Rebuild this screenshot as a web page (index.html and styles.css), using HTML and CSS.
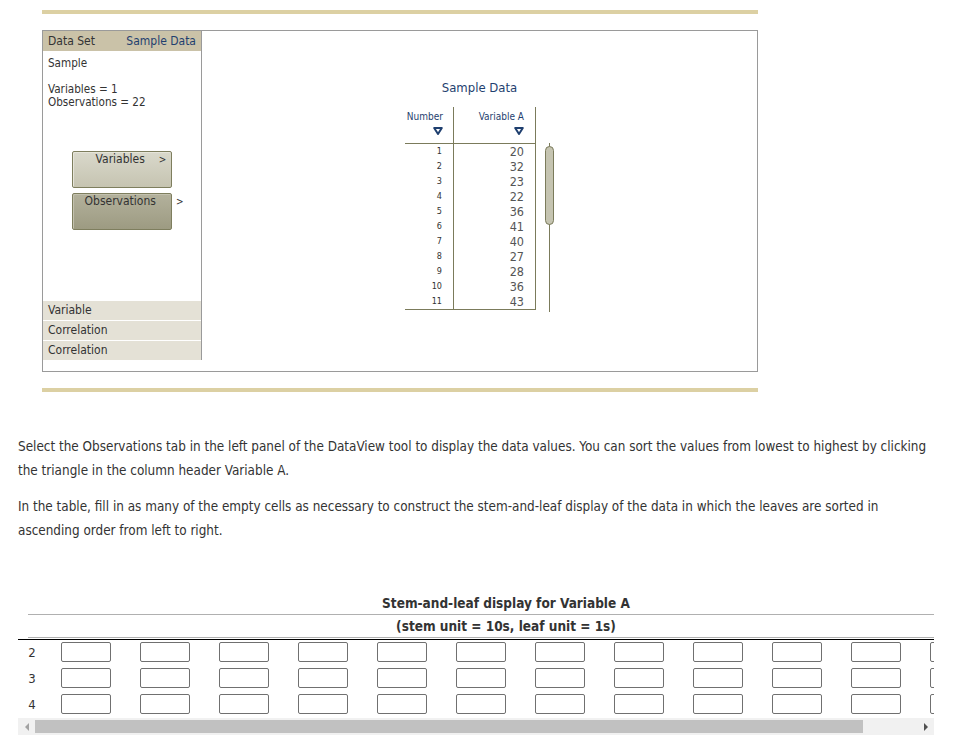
FILE: index.html
```html
<!DOCTYPE html>
<html>
<head>
<meta charset="utf-8">
<title>DataView</title>
<link rel="stylesheet" href="styles.css">
</head>
<body>
<div class="dv-wrap">
  <div class="rule"></div>
  <div class="dv">
    <div class="side">
      <div class="side-head"><span>Data Set</span><span class="blue">Sample Data</span></div>
      <div class="side-info">
        <div>Sample</div>
        <div class="counts">Variables = 1<br>Observations = 22</div>
      </div>
      <div class="tabs">
        <button class="tab tab-var"><span class="lbl">Variables<span class="arr">&gt;</span></span></button>
        <button class="tab tab-obs"><span class="lbl">Observations<span class="arr">&gt;</span></span></button>
      </div>
      <div class="spacer"></div>
      <ul class="menu">
        <li>Variable</li>
        <li>Correlation</li>
        <li>Correlation</li>
      </ul>
    </div>
    <div class="main">
      <div class="title">Sample Data</div>
      <div class="grid">
        <table class="obs">
          <thead>
            <tr>
              <th class="c1">Number<svg class="tri" width="10" height="8" viewBox="0 0 10 8"><polygon points="1.2,1 8.8,1 5,7" fill="none" stroke="#1f3f6f" stroke-width="2" stroke-linejoin="round"/></svg></th>
              <th class="c2">Variable A<svg class="tri" width="10" height="8" viewBox="0 0 10 8"><polygon points="1.2,1 8.8,1 5,7" fill="none" stroke="#1f3f6f" stroke-width="2" stroke-linejoin="round"/></svg></th>
            </tr>
          </thead>
          <tbody>
            <tr><td class="c1">1</td><td class="c2">20</td></tr>
            <tr><td class="c1">2</td><td class="c2">32</td></tr>
            <tr><td class="c1">3</td><td class="c2">23</td></tr>
            <tr><td class="c1">4</td><td class="c2">22</td></tr>
            <tr><td class="c1">5</td><td class="c2">36</td></tr>
            <tr><td class="c1">6</td><td class="c2">41</td></tr>
            <tr><td class="c1">7</td><td class="c2">40</td></tr>
            <tr><td class="c1">8</td><td class="c2">27</td></tr>
            <tr><td class="c1">9</td><td class="c2">28</td></tr>
            <tr><td class="c1">10</td><td class="c2">36</td></tr>
            <tr><td class="c1">11</td><td class="c2">43</td></tr>
          </tbody>
        </table>
        <div class="vscroll"><div class="vthumb"></div></div>
      </div>
    </div>
  </div>
  <div class="rule rule-bottom"></div>
</div>

<div class="q">
  <p>Select the Observations tab in the left panel of the DataView tool to display the data values. You can sort the values from lowest to highest by clicking the triangle in the column header Variable A.</p>
  <p>In the table, fill in as many of the empty cells as necessary to construct the stem-and-leaf display of the data in which the leaves are sorted in ascending order from left to right.</p>
</div>

<div class="sl-wrap">
  <div class="sl-clip">
    <div class="sl">
      <div class="sl-head">
        <div class="sl-row">Stem-and-leaf display for Variable A</div>
        <div class="sl-row">(stem unit = 10s, leaf unit = 1s)</div>
      </div>
      <table class="stem">
        <tbody>
          <tr>
            <td class="stem-n">2</td>
            <td class="cell"><input type="text"></td><td class="cell"><input type="text"></td><td class="cell"><input type="text"></td><td class="cell"><input type="text"></td><td class="cell"><input type="text"></td><td class="cell"><input type="text"></td><td class="cell"><input type="text"></td><td class="cell"><input type="text"></td><td class="cell"><input type="text"></td><td class="cell"><input type="text"></td><td class="cell"><input type="text"></td><td class="cell"><input type="text"></td>
          </tr>
          <tr>
            <td class="stem-n">3</td>
            <td class="cell"><input type="text"></td><td class="cell"><input type="text"></td><td class="cell"><input type="text"></td><td class="cell"><input type="text"></td><td class="cell"><input type="text"></td><td class="cell"><input type="text"></td><td class="cell"><input type="text"></td><td class="cell"><input type="text"></td><td class="cell"><input type="text"></td><td class="cell"><input type="text"></td><td class="cell"><input type="text"></td><td class="cell"><input type="text"></td>
          </tr>
          <tr>
            <td class="stem-n">4</td>
            <td class="cell"><input type="text"></td><td class="cell"><input type="text"></td><td class="cell"><input type="text"></td><td class="cell"><input type="text"></td><td class="cell"><input type="text"></td><td class="cell"><input type="text"></td><td class="cell"><input type="text"></td><td class="cell"><input type="text"></td><td class="cell"><input type="text"></td><td class="cell"><input type="text"></td><td class="cell"><input type="text"></td><td class="cell"><input type="text"></td>
          </tr>
        </tbody>
      </table>
    </div>
  </div>
  <div class="hbar">
    <span class="hbtn"><span class="arrow-l"></span></span>
    <span class="hthumb"></span>
    <span class="hbtn hbtn-r"><span class="arrow-r"></span></span>
  </div>
</div>
</body>
</html>
```

FILE: styles.css
```css
body {
  margin: 0;
  font-family: "DejaVu Sans Condensed", "DejaVu Sans", sans-serif;
  color: #333;
  background: #fff;
}

/* ---------- DataView widget ---------- */
.dv-wrap {
  margin-left: 42px;
  width: 716px;
  padding-top: 10px;
}
.rule {
  height: 4px;
  background: #dcd0a3;
}
.rule-bottom {
  margin-top: 16px;
}
.dv {
  margin-top: 16px;
  height: 340px;
  border: 1px solid #9a9a9a;
  display: flex;
}

.side {
  width: 158px;
  height: 329px;
  border-right: 1px solid #9a9a9a;
  display: flex;
  flex-direction: column;
  font-size: 12px;
}
.side-head {
  height: 20px;
  background: #cac2a8;
  display: flex;
  justify-content: space-between;
  align-items: center;
  padding: 0 5px;
}
.blue {
  color: #1f3f6f;
}
.side-info {
  padding: 5px 5px 0;
  line-height: 14px;
  font-size: 11.6px;
}
.counts {
  margin-top: 13px;
  line-height: 13px;
}
.tabs {
  margin-top: 42px;
  padding-left: 29px;
  display: flex;
  flex-direction: column;
  gap: 5px;
}
.tab {
  width: 100px;
  height: 37px;
  box-sizing: border-box;
  border: 1px solid #7e7e5e;
  border-radius: 2px;
  padding: 0;
  font: inherit;
  font-size: 12px;
  line-height: 14px;
  color: #333;
  display: flex;
  justify-content: center;
  align-items: flex-start;
  white-space: nowrap;
}
.tab-var {
  background: linear-gradient(#d9d8cb, #c6c4b1);
  box-shadow: inset 1px 1px 0 #e6e5da;
}
.tab-obs {
  background: linear-gradient(#b3b19c, #9d9b82);
  box-shadow: inset 1px 1px 0 #c3c1ae;
}
.lbl {
  margin-left: -4px;
}
.arr {
  margin-left: 14px;
  margin-right: -22px;
  font-size: 10px;
}
.tab-obs .arr {
  margin-left: 20px;
  margin-right: -28px;
}
.spacer {
  flex: 1;
}
.menu {
  list-style: none;
  margin: 0;
  padding: 0;
}
.menu li {
  height: 19px;
  line-height: 19px;
  border-top: 1px solid #fff;
  background: #e4e1d6;
  padding-left: 5px;
}

.main {
  flex: 1;
  display: flex;
  flex-direction: column;
  align-items: center;
}
.title {
  margin-top: 49px;
  font-size: 13px;
  line-height: 16px;
  color: #1f3f6f;
}
.grid {
  margin-top: 11px;
  display: flex;
  align-items: flex-start;
}
.obs {
  border-collapse: separate;
  border-spacing: 0;
}
.obs th {
  font-weight: normal;
  font-size: 10px;
  line-height: 12px;
  color: #1f3f6f;
  text-align: right;
  vertical-align: top;
  padding: 4px 10px 8px 0;
  border-bottom: 1px solid #7b7b5b;
  border-right: 1px solid #7b7b5b;
}
.obs th.c2 {
  padding-right: 11px;
}
.tri {
  display: block;
  margin: 4px 0 0 auto;
}
.obs .c1 {
  width: 37px;
}
.obs .c2 {
  width: 70px;
}
.obs td {
  height: 15px;
  line-height: 15px;
  padding: 0 11px 0 0;
  text-align: right;
  border-right: 1px solid #7b7b5b;
}
.obs td.c1 {
  font-size: 9px;
  color: #333;
}
.obs td.c2 {
  font-size: 12.5px;
  color: #555;
}
.obs tbody tr:last-child td {
  border-bottom: 1px solid #7b7b5b;
}
.vscroll {
  margin-left: 9px;
  margin-top: 36px;
  width: 9px;
  height: 169px;
  background: linear-gradient(to right, transparent 4px, #7b7b5b 4px, #7b7b5b 5px, transparent 5px);
  padding-top: 3px;
  box-sizing: border-box;
}
.vthumb {
  height: 79px;
  box-sizing: border-box;
  border: 1px solid #7b7b5b;
  border-radius: 5px;
  background: #c5c4b1;
}

/* ---------- Question text ---------- */
.q {
  margin: 43px 0 0 18px;
  width: 916px;
  font-size: 13.4px;
  line-height: 24px;
}
.q p {
  margin: 0 0 12px;
}
.q p:last-child {
  margin-bottom: 0;
}

/* ---------- Stem-and-leaf table ---------- */
.sl-wrap {
  margin: 49px 0 0 18px;
  width: 916px;
}
.sl-clip {
  overflow: hidden;
}
.sl {
  width: 976px;
}
.sl-head {
  margin-left: 10px;
  padding-right: 10px;
  text-align: center;
  font-weight: bold;
  font-size: 13.5px;
}
.sl-row {
  height: 22px;
  line-height: 22px;
  border-bottom: 1px solid #b0b0b0;
}
.stem {
  border-collapse: separate;
  border-spacing: 0;
  border-top: 1px solid #000;
  margin-top: 1px;
  width: 976px;
}
.stem td {
  padding: 2px 0 4px;
}
.stem-n {
  width: 28px;
  text-align: center;
  font-size: 13px;
}
.cell {
  width: 79px;
}
.cell input {
  display: block;
  margin: 0 auto;
  width: 50px;
  height: 20px;
  box-sizing: border-box;
  border: 1px solid #707070;
  border-radius: 2px;
  padding: 0;
  background: #fff;
}
.hbar {
  height: 17px;
  background: #f1f1f1;
  display: flex;
  align-items: center;
}
.hbtn {
  width: 17px;
  height: 17px;
  display: flex;
  align-items: center;
  justify-content: center;
}
.hbtn-r {
  margin-left: auto;
}
.arrow-l {
  width: 0;
  height: 0;
  border-top: 4px solid transparent;
  border-bottom: 4px solid transparent;
  border-right: 4px solid #a3a3a3;
}
.arrow-r {
  width: 0;
  height: 0;
  border-top: 4px solid transparent;
  border-bottom: 4px solid transparent;
  border-left: 4px solid #505050;
}
.hthumb {
  width: 828px;
  height: 13px;
  background: #c1c1c1;
}
```
